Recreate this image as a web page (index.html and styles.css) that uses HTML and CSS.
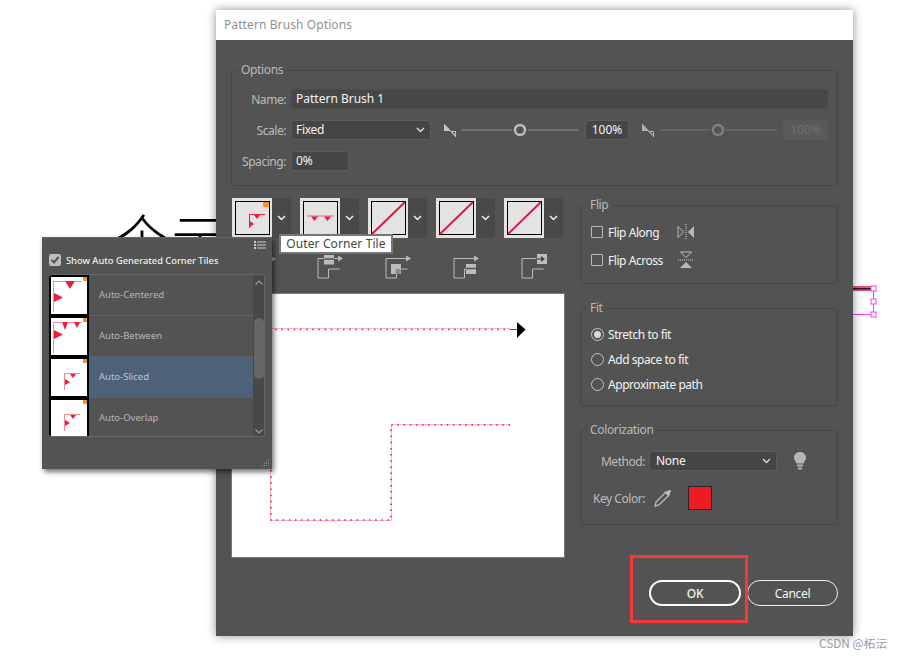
FILE: index.html
```html
<!DOCTYPE html>
<html lang="en">
<head>
<meta charset="utf-8">
<title>Pattern Brush Options</title>
<link rel="stylesheet" href="styles.css">
</head>
<body>
<div class="desktop">
  <div class="artboard-text">一个示</div>
  <svg class="handles" width="26" height="34" viewBox="0 0 26 34">
    <rect x="0" y="1" width="21" height="5" fill="#f0506a"/>
    <rect x="0" y="3" width="21" height="1.5" fill="#222"/>
    <path d="M20.5 3V29.5H0" fill="none" stroke="#f43cf0"/>
    <g fill="#fff" stroke="#f43cf0"><rect x="18" y="1" width="5" height="5"/><rect x="18" y="14" width="5" height="5"/><rect x="18" y="27" width="5" height="5"/></g>
  </svg>

  <section class="dialog">
    <header class="dialog-title">Pattern Brush Options</header>
    <div class="dialog-body">
      <fieldset class="group group-options">
        <legend>Options</legend>
        <div class="opt-row">
          <span class="label label-opt">Name:</span>
          <div class="field field-name">Pattern Brush 1</div>
        </div>
        <div class="opt-row">
          <span class="label label-opt">Scale:</span>
          <div class="field field-select field-scale">Fixed
            <svg class="chev" width="9" height="6" viewBox="0 0 9 6"><path d="M1 1l3.500 3.500L8 1" fill="none" stroke="#ddd" stroke-width="1.400"/></svg>
          </div>
          <svg class="scale-icon" width="12" height="13" viewBox="0 0 12 13"><path d="M0 0V7H7Z" fill="#c4c4c4"/><path d="M7.500 7.500H11.500V12Z" fill="none" stroke="#c4c4c4"/><path d="M0 0L12 13" stroke="#c4c4c4"/></svg>
          <svg class="slider" width="118" height="14" viewBox="0 0 118 14"><path d="M0 7H51M67 7H118" stroke="#7a7a7a" stroke-width="1.600"/><circle cx="59" cy="7" r="5" fill="none" stroke="#bdbdbd" stroke-width="2.400"/></svg>
          <div class="field field-pct">100%</div>
          <svg class="scale-icon" width="12" height="13" viewBox="0 0 12 13"><path d="M0 0V7H7Z" fill="#b0b0b0"/><path d="M7.500 7.500H11.500V12Z" fill="none" stroke="#b0b0b0"/><path d="M0 0L12 13" stroke="#b0b0b0"/></svg>
          <svg class="slider" width="118" height="14" viewBox="0 0 118 14"><path d="M0 7H51M67 7H118" stroke="#6a6a6a" stroke-width="1.600"/><circle cx="59" cy="7" r="5" fill="none" stroke="#808080" stroke-width="2.400"/></svg>
          <div class="field field-pct field-disabled">100%</div>
        </div>
        <div class="opt-row">
          <span class="label label-opt">Spacing:</span>
          <div class="field field-spacing">0%</div>
        </div>
      </fieldset>

      <div class="columns">
        <div class="col-left">
          <div class="tiles">
            <div class="tile">
              <svg class="tile-img" width="40" height="40" viewBox="0 0 40 40">
                <rect width="40" height="40" fill="#e3e3e3"/><rect x="3.500" y="3.500" width="34" height="33" fill="none" stroke="#000"/>
                <rect x="31" y="4" width="6" height="5" fill="#f7941d"/>
                <path d="M17 16.500H33M17.500 16V30" stroke="#ed1c40" fill="none"/>
                <path d="M22 17H28L25 21ZM18 23V29L22 26Z" fill="#ed1c40"/>
              </svg>
              <svg class="tile-chev" width="9" height="6" viewBox="0 0 9 6"><path d="M1 1l3.500 3.500L8 1" fill="none" stroke="#eee" stroke-width="1.500"/></svg>
            </div>
            <div class="tile">
              <svg class="tile-img" width="40" height="40" viewBox="0 0 40 40">
                <rect width="40" height="40" fill="#e3e3e3"/><rect x="3.500" y="3.500" width="34" height="33" fill="none" stroke="#000"/>
                <path d="M7 18H34" stroke="#f58a98" stroke-width="1.500"/>
                <path d="M11 18.500H18L14.500 23ZM24 18.500H31L27.500 23Z" fill="#ed1c40"/>
              </svg>
              <svg class="tile-chev" width="9" height="6" viewBox="0 0 9 6"><path d="M1 1l3.500 3.500L8 1" fill="none" stroke="#eee" stroke-width="1.500"/></svg>
            </div>
            <div class="tile">
              <svg class="tile-img" width="40" height="40" viewBox="0 0 40 40">
                <rect width="40" height="40" fill="#e3e3e3"/><rect x="3.500" y="3.500" width="34" height="33" fill="none" stroke="#000"/>
                <path d="M4 36L37 4" stroke="#e0103a" stroke-width="1.800"/>
              </svg>
              <svg class="tile-chev" width="9" height="6" viewBox="0 0 9 6"><path d="M1 1l3.500 3.500L8 1" fill="none" stroke="#eee" stroke-width="1.500"/></svg>
            </div>
            <div class="tile">
              <svg class="tile-img" width="40" height="40" viewBox="0 0 40 40">
                <rect width="40" height="40" fill="#e3e3e3"/><rect x="3.500" y="3.500" width="34" height="33" fill="none" stroke="#000"/>
                <path d="M4 36L37 4" stroke="#e0103a" stroke-width="1.800"/>
              </svg>
              <svg class="tile-chev" width="9" height="6" viewBox="0 0 9 6"><path d="M1 1l3.500 3.500L8 1" fill="none" stroke="#eee" stroke-width="1.500"/></svg>
            </div>
            <div class="tile">
              <svg class="tile-img" width="40" height="40" viewBox="0 0 40 40">
                <rect width="40" height="40" fill="#e3e3e3"/><rect x="3.500" y="3.500" width="34" height="33" fill="none" stroke="#000"/>
                <path d="M4 36L37 4" stroke="#e0103a" stroke-width="1.800"/>
              </svg>
              <svg class="tile-chev" width="9" height="6" viewBox="0 0 9 6"><path d="M1 1l3.500 3.500L8 1" fill="none" stroke="#eee" stroke-width="1.500"/></svg>
            </div>
          </div>

          <div class="tile-icons">
            <svg width="27" height="25" viewBox="0 0 27 25"><path d="M1 24V4.500H21" fill="none" stroke="#bbb"/><path d="M21 1.500L27 5L21 8.500Z" fill="#aaa"/></svg>
            <svg width="27" height="25" viewBox="0 0 27 25"><path d="M1 4.500H21M1 4.500V24H11.500V15H22.500" fill="none" stroke="#bbb"/><path d="M21 1.500L26 4.500L21 7.500Z" fill="#bbb"/><rect x="7" y="1" width="10" height="9.500" fill="#bbb"/><path d="M7 5H17" stroke="#555" stroke-width="1.500"/></svg>
            <svg width="27" height="25" viewBox="0 0 27 25"><path d="M1 4.500H21M1 4.500V24H11.500V15H22.500" fill="none" stroke="#bbb"/><path d="M21 1.500L26 4.500L21 7.500Z" fill="#bbb"/><rect x="6" y="10" width="10" height="10" fill="#bbb"/><rect x="10.500" y="15" width="5" height="5" fill="#8c8c8c"/></svg>
            <svg width="27" height="25" viewBox="0 0 27 25"><path d="M1 4.500H21M1 4.500V24H11.500V15H22.500" fill="none" stroke="#bbb"/><path d="M21 1.500L26 4.500L21 7.500Z" fill="#bbb"/><rect x="13" y="10" width="10" height="10" fill="#bbb"/><path d="M13 14.500H23" stroke="#555" stroke-width="1.500"/></svg>
            <svg width="27" height="25" viewBox="0 0 27 25"><path d="M1 24V4.500H16M1 24H11.500V15H22.500" fill="none" stroke="#bbb"/><rect x="16" y="0" width="10" height="10" fill="#bbb"/><path d="M15 5H21" stroke="#444" stroke-width="1.200"/><path d="M20 2L24 5L20 8Z" fill="#444"/></svg>
          </div>

          <div class="preview">
            <svg width="332" height="263" viewBox="0 0 332 263">
              <path d="M0 34.500H278" stroke="#fbb6c0" fill="none"/>
              <path d="M0 35.500H278" stroke="#ed1c3c" stroke-width="1.600" stroke-dasharray="1.500 4.670" fill="none"/>
              <path d="M278 35.500H286" stroke="#555" stroke-width="1"/>
              <path d="M285 28L293.500 35.500L285 44Z" fill="#000"/>
              <path d="M278 130.500H159.500V226.500H38.500V130" stroke="#fbb6c0" fill="none"/>
              <path d="M278 131H159V226H39V130" stroke="#ed1c3c" stroke-width="1.600" stroke-dasharray="1.500 4.670" fill="none"/>
            </svg>
          </div>
        </div>

        <div class="col-right">
          <fieldset class="group group-flip">
            <legend>Flip</legend>
            <div class="check-row">
              <span class="checkbox"></span><span class="value flip-text">Flip Along</span>
              <svg width="18" height="16" viewBox="0 0 18 16"><path d="M1 2.500L6.500 8L1 13.500Z" fill="none" stroke="#bbb"/><path d="M9 0V16" stroke="#ccc" stroke-dasharray="1 1"/><path d="M17 2V14L11 8Z" fill="#bbb"/></svg>
            </div>
            <div class="check-row">
              <span class="checkbox"></span><span class="value flip-text">Flip Across</span>
              <svg class="across" width="16" height="18" viewBox="0 0 16 18"><path d="M2.500 1H13.500L8 6.500Z" fill="none" stroke="#bbb"/><path d="M0 9H16" stroke="#ccc" stroke-dasharray="1 1"/><path d="M2 17H14L8 11Z" fill="#bbb"/></svg>
            </div>
          </fieldset>

          <fieldset class="group group-fit">
            <legend>Fit</legend>
            <div class="radio-row"><span class="radio radio-on"></span><span class="value">Stretch to fit</span></div>
            <div class="radio-row"><span class="radio"></span><span class="value">Add space to fit</span></div>
            <div class="radio-row"><span class="radio"></span><span class="value">Approximate path</span></div>
          </fieldset>

          <fieldset class="group group-color">
            <legend>Colorization</legend>
            <div class="color-row">
              <span class="label label-method">Method:</span>
              <div class="field field-select field-method">None
                <svg class="chev" width="9" height="6" viewBox="0 0 9 6"><path d="M1 1l3.500 3.500L8 1" fill="none" stroke="#ddd" stroke-width="1.400"/></svg>
              </div>
              <svg class="bulb" width="12" height="18" viewBox="0 0 12 18"><path d="M6 0C2.500 0 0 2.500 0 5.500C0 8 1.500 9 2.500 11.500H9.500C10.500 9 12 8 12 5.500C12 2.500 9.500 0 6 0Z" fill="#b5b5b5"/><rect x="3" y="12.500" width="6" height="2" fill="#b5b5b5"/><rect x="4" y="15.500" width="4" height="2" fill="#b5b5b5"/></svg>
            </div>
            <div class="key-row">
              <span class="label label-key">Key Color:</span>
              <svg class="dropper" width="18" height="18" viewBox="0 0 18 18"><path d="M11 4L2 13L1 17L5 16L14 7" fill="none" stroke="#bbb" stroke-width="1.300"/><path d="M10 3L15 8L17 1.500L16 1Z" fill="#bbb"/></svg>
              <span class="swatch"></span>
            </div>
          </fieldset>

          <div class="buttons">
            <button class="btn btn-primary" type="button">OK</button>
            <button class="btn" type="button">Cancel</button>
          </div>
        </div>
      </div>
    </div>
  </section>

  <aside class="popup">
    <div class="popup-menu">
      <svg width="12" height="8" viewBox="0 0 12 8"><path d="M0 0h2v2H0zM0 3h2v2H0zM0 6h2v2H0z" fill="#ccc"/><path d="M3 1H12M3 4H12M3 7H12" stroke="#ccc"/></svg>
    </div>
    <div class="popup-check">
      <span class="checkbox-on"><svg width="10" height="10" viewBox="0 0 10 10"><path d="M1.500 5L4 7.500L8.500 2" fill="none" stroke="#555" stroke-width="2"/></svg></span>
      <span>Show Auto Generated Corner Tiles</span>
    </div>
    <div class="list">
      <div class="rows">
        <div class="row">
          <svg class="thumb" width="40" height="41" viewBox="0 0 40 41"><rect width="40" height="41" fill="#000"/><rect x="2" y="2" width="36" height="37" fill="#fff"/><rect x="34" y="2" width="4" height="4" fill="#f7941d"/><path d="M4.500 6.500H33M4.500 6V37" stroke="#f58a98" fill="none"/><path d="M16 6H26L21 14ZM5 18V27L14 22.500Z" fill="#ed1c3c"/></svg>
          <span>Auto-Centered</span>
        </div>
        <div class="row">
          <svg class="thumb" width="40" height="41" viewBox="0 0 40 41"><rect width="40" height="41" fill="#000"/><rect x="2" y="2" width="36" height="37" fill="#fff"/><rect x="34" y="2" width="4" height="4" fill="#f7941d"/><path d="M4.500 6.500H33M4.500 6V37" stroke="#f58a98" fill="none"/><path d="M13 6H19L16 14ZM25 6H31L28 12ZM5 14V23L14 18.500Z" fill="#ed1c3c"/></svg>
          <span>Auto-Between</span>
        </div>
        <div class="row row-selected">
          <svg class="thumb" width="40" height="41" viewBox="0 0 40 41"><rect width="40" height="41" fill="#000"/><rect x="2" y="2" width="36" height="37" fill="#fff"/><rect x="34" y="2" width="4" height="4" fill="#f7941d"/><path d="M15.500 16.500H31M15.500 16V33" stroke="#f58a98" fill="none"/><path d="M21 17H27L24 21ZM16 22V28L21 25Z" fill="#ed1c3c"/></svg>
          <span>Auto-Sliced</span>
        </div>
        <div class="row">
          <svg class="thumb" width="40" height="41" viewBox="0 0 40 41"><rect width="40" height="41" fill="#000"/><rect x="2" y="2" width="36" height="37" fill="#fff"/><rect x="34" y="2" width="4" height="4" fill="#f7941d"/><path d="M15.500 16.500H31M15.500 16V33" stroke="#f58a98" fill="none"/><path d="M21 17H27L24 21ZM16 22V28L21 25Z" fill="#ed1c3c"/></svg>
          <span>Auto-Overlap</span>
        </div>
      </div>
      <div class="scrollbar">
        <svg width="8" height="5" viewBox="0 0 8 5"><path d="M0.500 4.500L4 1L7.500 4.500" fill="none" stroke="#999" stroke-width="1.200"/></svg>
        <div class="scroll-thumb"></div>
        <svg class="scroll-down" width="8" height="5" viewBox="0 0 8 5"><path d="M0.500 0.500L4 4L7.500 0.500" fill="none" stroke="#999" stroke-width="1.200"/></svg>
      </div>
    </div>
    <div class="popup-foot">
      <svg width="9" height="9" viewBox="0 0 9 9"><path d="M7 1h1v1H7zM5 3h1v1H5zM7 3h1v1H7zM3 5h1v1H3zM5 5h1v1H5zM7 5h1v1H7zM1 7h1v1H1zM3 7h1v1H3zM5 7h1v1H5zM7 7h1v1H7z" fill="#8a8a8a"/></svg>
    </div>
  </aside>

  <div class="tooltip">Outer Corner Tile</div>
  <div class="highlight"></div>
  <div class="watermark">CSDN @柘沄</div>
</div>
</body>
</html>
```

FILE: styles.css
```css
* { box-sizing: border-box; }
html, body { margin: 0; padding: 0; background: #fff; }
.desktop {
  position: relative;
  width: 902px;
  height: 659px;
  overflow: hidden;
  background: #fff;
  font-family: "Noto Sans", "Noto Sans CJK SC", sans-serif;
  font-size: 12px;
}
.artboard-text {
  position: absolute;
  left: 55px;
  top: 198px;
  font-family: "Noto Sans CJK SC", sans-serif;
  font-size: 58px;
  font-weight: 300;
  line-height: 80px;
  color: #000;
  white-space: nowrap;
}
.handles { position: absolute; left: 853px; top: 285px; }

.dialog {
  position: absolute;
  left: 216px;
  top: 10px;
  width: 637px;
  height: 626px;
  background: #535353;
  box-shadow: 0 0 9px rgba(0, 0, 0, .45);
  display: flex;
  flex-direction: column;
}
.dialog-title {
  height: 30px;
  flex: none;
  background: #fff;
  color: #8f8f8f;
  line-height: 29px;
  padding-left: 8px;
  font-size: 12px;
  letter-spacing: .1px;
}
.dialog-body { padding: 22px 15px 0; }

.group {
  margin: 0;
  min-width: 0;
  border: 1px solid #474747;
  border-radius: 3px;
  padding: 0;
}
.group legend {
  margin-left: 6px;
  padding: 0 3px;
  color: #b9b9b9;
  font-size: 12px;
  line-height: 16px;
  letter-spacing: -.35px;
}
.group-options {
  height: 124px;
  padding: 11px 9px 0 0;
  display: flex;
  flex-direction: column;
  gap: 11px;
}
.opt-row { display: flex; align-items: center; height: 20px; }
.label { color: #bcbcbc; white-space: nowrap; letter-spacing: -.45px; }
.label-opt { width: 54px; margin-right: 5px; text-align: right; }
.value { color: #f2f2f2; white-space: nowrap; letter-spacing: -.45px; }

.field {
  height: 20px;
  background: #454545;
  border: 1px solid #5c5c5c;
  border-radius: 3px;
  color: #f4f4f4;
  line-height: 18px;
  padding-left: 4px;
  white-space: nowrap;
}
.field-name { flex: 1; border-color: #4a4a4a; background: #474747; }
.field-select { display: flex; align-items: center; justify-content: space-between; padding-right: 5px; letter-spacing: -.3px; }
.field-scale { width: 140px; }
.field-pct { width: 44px; margin-left: 6px; text-align: center; padding: 0; }
.field-disabled { width: 45px; background: #5a5a5a; border-color: #5a5a5a; color: #6f6f6f; }
.field-spacing { width: 58px; padding-left: 4px; }
.field-method { width: 128px; padding-left: 6px; }

.scale-icon { margin: 0 5px 0 13px; flex: none; }
.slider { flex: none; }

.columns { display: flex; gap: 15px; }
.col-left { width: 334px; padding-top: 12px; }
.col-right { width: 258px; padding-top: 11px; display: flex; flex-direction: column; }

.tiles { display: flex; gap: 9px; padding-left: 1px; }
.tile {
  width: 59px;
  height: 40px;
  background: #494949;
  border-radius: 3px;
  display: flex;
  align-items: center;
}
.tile-img { flex: none; }
.tile-chev { margin-left: 5px; }

.tile-icons { display: flex; gap: 41px; padding-left: 18px; margin-top: 16px; height: 25px; }
.preview {
  margin-top: 14px;
  width: 334px;
  height: 265px;
  border: 1px solid #787878;
  background: #fff;
}
.preview svg { display: block; }

.group-flip { height: 87px; padding: 9px 0 0; }
.check-row { display: flex; align-items: center; height: 20px; margin: 0 0 8px 10px; }
.checkbox { width: 12px; height: 12px; border: 1px solid #b9b9b9; border-radius: 1px; margin-right: 5px; flex: none; }
.flip-text { width: 69px; }
.across { margin-left: 1px; }

.group-fit { height: 106px; margin-top: 16px; padding: 8px 0 0; display: flex; flex-direction: column; gap: 5px; }
.radio-row { display: flex; align-items: center; height: 20px; margin-left: 10px; }
.radio { width: 13px; height: 13px; border: 1px solid #c4c4c4; border-radius: 50%; margin-right: 4px; flex: none; display: flex; align-items: center; justify-content: center; }
.radio-on::after { content: ""; width: 7px; height: 7px; border-radius: 50%; background: #d8d8d8; }

.group-color { height: 103px; margin-top: 16px; padding: 13px 0 0; }
.color-row { display: flex; align-items: center; height: 20px; margin-left: 10px; }
.label-method { width: 54px; margin-right: 4px; text-align: right; }
.bulb { margin-left: 17px; }
.key-row { display: flex; align-items: center; height: 24px; margin: 15px 0 0 10px; }
.label-key { width: 54px; text-align: right; }
.dropper { margin-left: 9px; }
.swatch { width: 24px; height: 24px; background: #ed1c24; border: 1px solid #262626; margin-left: 16px; }

.buttons { display: flex; justify-content: flex-end; gap: 6px; margin-top: 55px; }
.btn {
  width: 91px;
  height: 26px;
  border: 1px solid #f0f0f0;
  border-radius: 13px;
  background: transparent;
  color: #f4f4f4;
  font: 12px "Noto Sans", sans-serif;
  letter-spacing: -.3px;
  padding: 0;
}
.btn-primary { width: 92px; border-width: 2px; border-color: #fff; font-weight: 500; }

.popup {
  position: absolute;
  left: 42px;
  top: 237px;
  width: 230px;
  height: 232px;
  background: #535353;
  border-top: 1px solid #666;
  box-shadow: 2px 3px 5px rgba(0, 0, 0, .55);
  padding: 3px 7px 0;
}
.popup-menu { display: flex; justify-content: flex-end; height: 8px; margin-right: -1px; }
.popup-menu svg { display: block; }
.popup-check {
  display: flex;
  align-items: center;
  gap: 5px;
  height: 14px;
  margin-top: 4px;
  color: #f0f0f0;
  font-size: 9.300px;
  font-weight: 500;
  white-space: nowrap;
}
.checkbox-on { width: 12px; height: 12px; background: #bdbdbd; border-radius: 2px; display: flex; align-items: center; justify-content: center; flex: none; }
.list {
  display: flex;
  height: 163px;
  margin-top: 7px;
  border: 1px solid #666;
  border-width: 1px 1px 1px 0;
  border-radius: 3px;
  overflow: hidden;
}
.rows { flex: 1; min-width: 0; }
.row {
  display: flex;
  align-items: flex-start;
  height: 41px;
  color: #b5b5b5;
  font-size: 9.500px;
}
.row span { line-height: 40px; padding-left: 10px; flex: 1; border-bottom: 1px solid #616161; height: 41px; }
.row-selected span { background: #4d6279; color: #b9c5d2; border-bottom-color: #4d6279; }
.thumb { flex: none; display: block; }
.scrollbar {
  width: 11px;
  flex: none;
  background: #484848;
  display: flex;
  flex-direction: column;
  align-items: center;
  padding-top: 5px;
}
.scrollbar svg { display: block; }
.scroll-thumb { width: 10px; height: 61px; margin-top: 33px; background: #666; border-radius: 5px; }
.scroll-down { margin-top: 50px; }
.popup-foot { display: flex; justify-content: flex-end; margin: 21px -5px 0 0; }
.popup-foot svg { display: block; }

.tooltip {
  position: absolute;
  left: 279px;
  top: 234px;
  width: 114px;
  height: 20px;
  background: #fff;
  border: 2px solid #767676;
  color: #444;
  font-size: 12px;
  line-height: 16px;
  text-align: center;
  letter-spacing: .1px;
  white-space: nowrap;
}
.highlight {
  position: absolute;
  left: 630px;
  top: 555px;
  width: 118px;
  height: 68px;
  border: 3px solid #f63838;
}
.watermark {
  position: absolute;
  left: 819px;
  top: 635px;
  color: #9a9a9a;
  font: 11.800px/16px "Noto Sans CJK SC", sans-serif;
  white-space: nowrap;
}
```
